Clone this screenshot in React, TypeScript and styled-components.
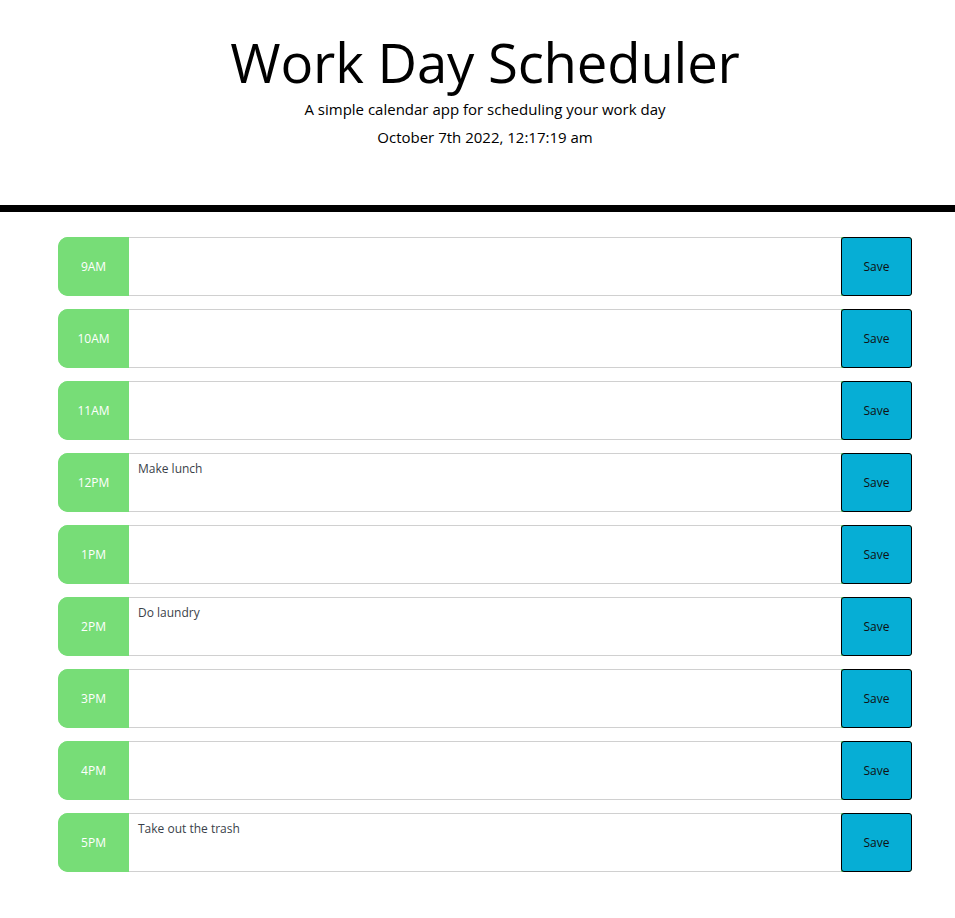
import React from "react";
import styled, { createGlobalStyle } from "styled-components";

const GlobalStyle = createGlobalStyle`
  body {
    margin: 0;
    font-family: "Open Sans", "Liberation Sans", sans-serif;
    background: #ffffff;
    color: #000;
  }
`;

const Header = styled.header`
  padding: 28px 0 0 15px;
  height: 177px;
  text-align: center;
  border-bottom: 7px solid #000;
`;
const Title = styled.h1`
  margin: 0;
  font-size: 54.5px;
  font-weight: 400;
  line-height: 68px;
  letter-spacing: -0.2px;
`;
const Lead = styled.p`
  margin: 0;
  font-size: 15px;
  line-height: 26px;
`;
const Clock = styled.p`
  margin: 2px 0 0;
  font-size: 15px;
  line-height: 26px;
`;

const Schedule = styled.main`
  display: flex;
  flex-direction: column;
  gap: 13px;
  width: 854px;
  margin: 25px 0 0 58px;
`;
const Row = styled.div`
  display: flex;
  height: 59px;
  background: #77dd77;
  border-radius: 10px 4px 4px 10px;
`;
const Hour = styled.div`
  width: 71px;
  display: flex;
  align-items: center;
  justify-content: center;
  color: #fff;
  font-size: 12px;
  background: #77dd77;
  border-radius: 10px 0 0 10px;
`;
const Note = styled.textarea`
  flex: 1;
  margin: 0;
  padding: 6px 9px;
  border: 1px solid #d0d0d0;
  border-left: none;
  border-right: none;
  background: #fff;
  resize: none;
  font-family: "Open Sans", "Liberation Sans", sans-serif;
  font-size: 12px;
  color: #3a3f4a;
  outline: none;
`;
const SaveBtn = styled.button`
  width: 71px;
  margin: 0;
  padding: 0;
  background: #06aed5;
  border: 1px solid #000;
  border-radius: 3px;
  font-family: "Open Sans", "Liberation Sans", sans-serif;
  font-size: 12px;
  color: #111;
  cursor: pointer;
`;

const hours = [
  { label: "9AM", text: "" },
  { label: "10AM", text: "" },
  { label: "11AM", text: "" },
  { label: "12PM", text: "Make lunch" },
  { label: "1PM", text: "" },
  { label: "2PM", text: "Do laundry" },
  { label: "3PM", text: "" },
  { label: "4PM", text: "" },
  { label: "5PM", text: "Take out the trash" },
];

export default function App() {
  return (
    <>
      <GlobalStyle />
      <Header>
        <Title>Work Day Scheduler</Title>
        <Lead>A simple calendar app for scheduling your work day</Lead>
        <Clock>October 7th 2022, 12:17:19 am</Clock>
      </Header>
      <Schedule>
        {hours.map((h) => (
          <Row key={h.label}>
            <Hour>{h.label}</Hour>
            <Note defaultValue={h.text} />
            <SaveBtn>Save</SaveBtn>
          </Row>
        ))}
      </Schedule>
    </>
  );
}
